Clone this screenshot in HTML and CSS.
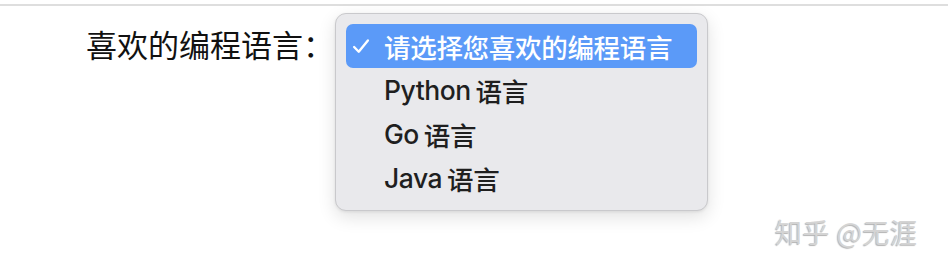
FILE: index.html
```html
<!DOCTYPE html>
<html lang="zh">
<head>
<meta charset="utf-8">
<link rel="stylesheet" href="styles.css">
</head>
<body>
<div class="topline"></div>
<div class="field">
  <span class="label">喜欢的编程语言：</span>
</div>
<div class="menu">
  <div class="opt selected">
    <svg class="check" viewBox="0 0 16 16" width="20" height="20"><path d="M2.5 8.8 L6.2 12.6 L13.5 3.6" fill="none" stroke="#fff" stroke-width="1.9" stroke-linecap="round" stroke-linejoin="round"/></svg>
    <span class="zh">请选择您喜欢的编程语言</span>
  </div>
  <div class="opt"><span class="en">Python</span> <span class="zh">语言</span></div>
  <div class="opt"><span class="en">Go</span> <span class="zh">语言</span></div>
  <div class="opt"><span class="en">Java</span> <span class="zh">语言</span></div>
</div>
<div class="watermark">知乎 @无涯</div>
</body>
</html>
```

FILE: styles.css
```css
html, body {
  margin: 0;
  padding: 0;
  background: #fff;
  width: 948px;
  height: 272px;
  overflow: hidden;
}
body {
  position: relative;
  font-family: Inter, "Noto Sans CJK SC", sans-serif;
}
.topline {
  height: 4px;
  border-bottom: 2px solid #dedede;
}
.field {
  display: flex;
  padding: 18px 0 0 86px;
}
.label {
  font-size: 31px;
  line-height: 40px;
  color: #111;
  font-family: "Noto Sans CJK SC", sans-serif;
}
.menu {
  position: absolute;
  left: 335px;
  top: 13px;
  width: 351px;
  padding: 10px;
  background: #e9e9ec;
  border: 1px solid #c9c9cc;
  border-radius: 11px;
  box-shadow: 0 6px 18px rgba(0,0,0,0.12), 0 1px 3px rgba(0,0,0,0.08);
  display: flex;
  flex-direction: column;
}
.opt {
  height: 44px;
  display: flex;
  align-items: center;
  gap: 5px;
  padding-left: 38px;
  font-size: 26.5px;
  color: #1f1f1f;
  border-radius: 7px;
  position: relative;
}
.opt .en {
  font-family: Inter, sans-serif;
  font-weight: 450;
  letter-spacing: -0.5px;
}
.opt .zh {
  font-family: "Noto Sans CJK SC", sans-serif;
  font-weight: 500;
  letter-spacing: -0.3px;
}
.opt.selected {
  background: #5b9af8;
  color: #fff;
}
.check {
  position: absolute;
  left: 5px;
  top: 12px;
}
.watermark {
  position: absolute;
  left: 775px;
  top: 214px;
  font-size: 27px;
  line-height: 36px;
  font-family: "Noto Sans CJK SC", sans-serif;
  color: #d4d4d4;
  text-shadow: -1px 1px 1px rgba(0,0,0,0.3);
  letter-spacing: 0.5px;
}
```
